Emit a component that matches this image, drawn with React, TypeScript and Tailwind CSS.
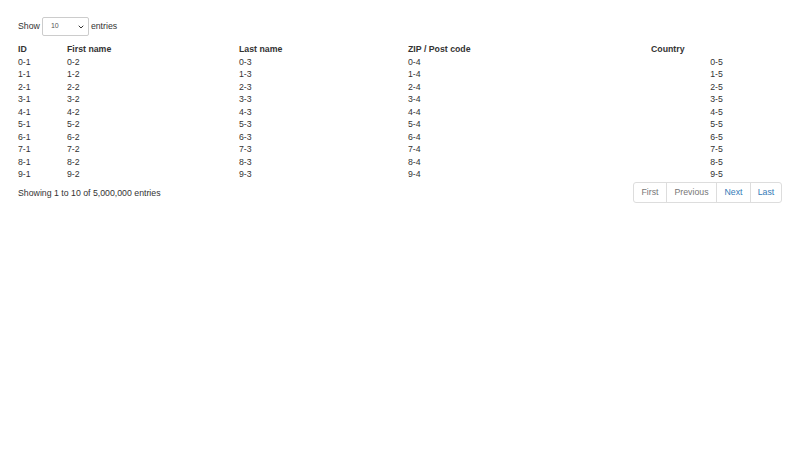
import { ChevronDown } from "lucide-react";

const columns = ["ID", "First name", "Last name", "ZIP / Post code", "Country"];

const rows = Array.from({ length: 10 }, (_, i) => [1, 2, 3, 4, 5].map((c) => `${i}-${c}`));

export default function App() {
  return (
    <div className="min-h-[450px] w-[800px] bg-white px-[18px] pt-[17px] font-['Liberation_Sans',Arial,sans-serif] text-[8.75px] leading-[12.5px] text-[#333]">
      {/* longueur */}
      <div className="flex h-[19px] items-center">
        <span>Show</span>
        <div className="relative mx-[2px] flex h-[19px] w-[47px] items-center rounded-[2px] border border-[#ccc] bg-white pl-[8px] text-[7px] text-[#555]">
          10
          <ChevronDown className="absolute right-[3px] top-[5px] h-[8px] w-[8px] text-[#333]" strokeWidth={3} />
        </div>
        <span>entries</span>
      </div>

      {/* tableau */}
      <div className="mt-[7px] grid grid-cols-[49px_172px_169px_243px_131px]">
        {columns.map((col) => (
          <div key={col} className="font-bold">
            {col}
          </div>
        ))}
        {rows.map((row) =>
          row.map((cell, j) => (
            <div key={cell} className={j === 4 ? "text-center" : ""}>
              {cell}
            </div>
          )),
        )}
      </div>

      {/* pied */}
      <div className="mt-[1.5px] flex items-center justify-between">
        <div className="pt-[1px]">Showing 1 to 10 of 5,000,000 entries</div>
        <div className="flex h-[21px] overflow-hidden rounded-[3px] border border-[#ddd] text-[8.75px]">
          <span className="flex w-[32px] items-center justify-center text-[#777]">First</span>
          <span className="flex w-[50px] items-center justify-center border-l border-[#ddd] text-[#777]">Previous</span>
          <span className="flex w-[34px] items-center justify-center border-l border-[#ddd] text-[#337ab7]">Next</span>
          <span className="flex w-[31px] items-center justify-center border-l border-[#ddd] text-[#337ab7]">Last</span>
        </div>
      </div>
    </div>
  );
}
